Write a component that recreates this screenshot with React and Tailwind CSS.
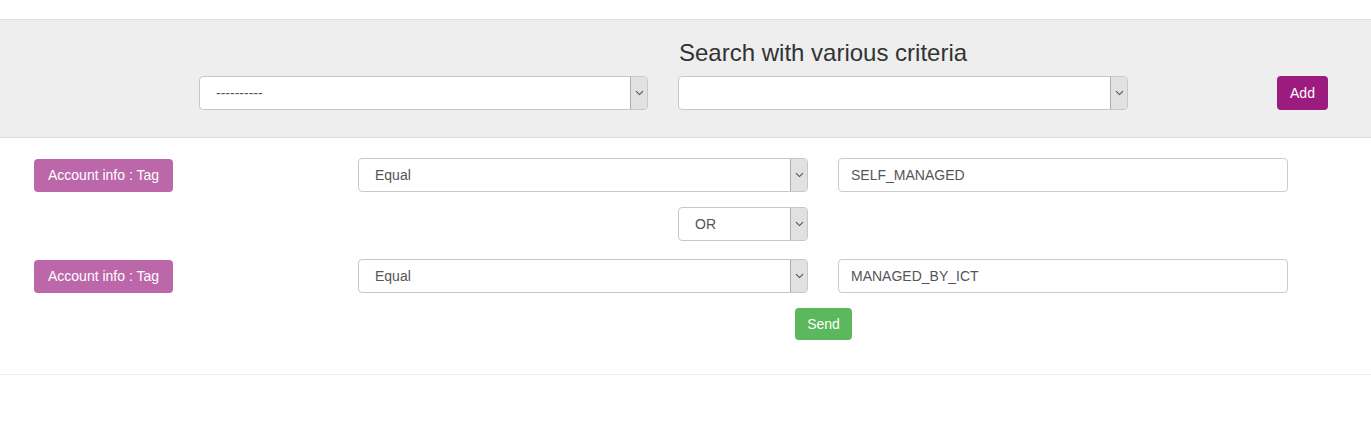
import { useState } from 'react'

const font = { fontFamily: '"Liberation Sans", Arial, sans-serif' }

function Chevron() {
  return (
    <span className="absolute right-0 top-0 bottom-0 w-[17px] flex items-center justify-center bg-[#e1e1e1] border-l border-[#adadad] rounded-r-[3px]">
      <svg width="9" height="6" viewBox="0 0 9 6" fill="none">
        <path d="M1 1.2 L4.5 4.6 L8 1.2" stroke="#505050" strokeWidth="1.1" />
      </svg>
    </span>
  )
}

function FakeSelect({ value, className = '' }) {
  return (
    <div className={`relative h-[34px] bg-white border border-[#c8c8c8] rounded-[4px] flex items-center pl-4 text-[14px] text-[#555] ${className}`}>
      <span className="truncate">{value}</span>
      <Chevron />
    </div>
  )
}

function TextBox({ value }) {
  return (
    <div className="h-[34px] w-[450px] bg-white border border-[#ccc] rounded-[4px] flex items-center px-3 text-[14px] text-[#555]">
      {value}
    </div>
  )
}

function CriteriaRow({ field, op, value }) {
  return (
    <div className="flex items-center h-[34px]">
      <button type="button" className="ml-[34px] w-[139px] h-[33px] rounded-[4px] bg-[#bc67aa] text-white text-[14px]">
        {field}
      </button>
      <FakeSelect value={op} className="ml-[185px] w-[450px]" />
      <div className="ml-[30px]">
        <TextBox value={value} />
      </div>
    </div>
  )
}

export default function App() {
  const [rows] = useState([
    { id: 1, field: 'Account info : Tag', op: 'Equal', value: 'SELF_MANAGED' },
    { id: 2, field: 'Account info : Tag', op: 'Equal', value: 'MANAGED_BY_ICT' },
  ])

  return (
    <div className="w-[1371px] h-[423px] bg-white" style={font}>
      <div className="h-[19px]" />
      <div className="bg-[#eeeeee] border-t border-b border-[#dddddd] h-[119px]">
        <h3 className="pl-[679px] pt-[19px] text-[24px] leading-[28px] text-[#333]">Search with various criteria</h3>
        <div className="flex items-center mt-[9px]">
          <FakeSelect value="----------" className="ml-[199px] w-[449px]" />
          <FakeSelect value="" className="ml-[30px] w-[450px]" />
          <button type="button" className="ml-[149px] w-[51px] h-[34px] rounded-[4px] bg-[#9b1b7f] text-white text-[14px]">
            Add
          </button>
        </div>
      </div>

      <div className="border-b border-[#eeeeee] h-[237px] pt-[20px]">
        <CriteriaRow {...rows[0]} />
        <div className="flex mt-[15px]">
          <FakeSelect value="OR" className="ml-[678px] w-[130px]" />
        </div>
        <div className="mt-[18px]">
          <CriteriaRow {...rows[1]} />
        </div>
        <div className="flex mt-[15px]">
          <button type="button" className="ml-[795px] w-[57px] h-[32px] rounded-[4px] bg-[#5cb85c] text-white text-[14px]">
            Send
          </button>
        </div>
      </div>
    </div>
  )
}
